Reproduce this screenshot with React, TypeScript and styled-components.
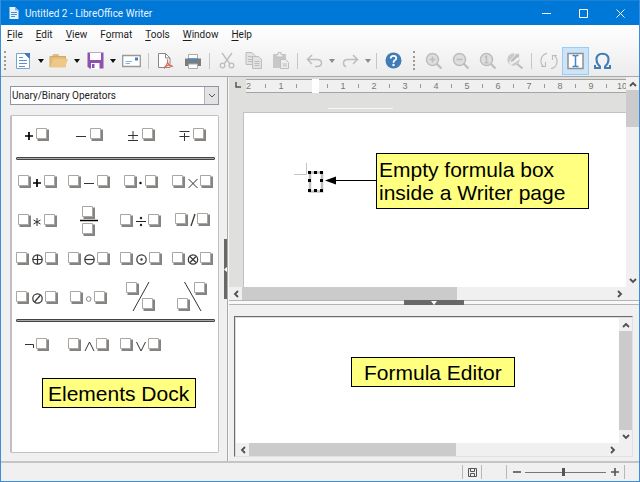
import React from "react";
import styled, { createGlobalStyle } from "styled-components";

const GlobalStyle = createGlobalStyle`
  * { box-sizing: border-box; }
  html, body { margin: 0; padding: 0; }
  body { font-family: Roboto, "Open Sans", sans-serif; font-size: 10px; color: #1c1c1c; }
  button { border: 0; padding: 0; margin: 0; background: none; font: inherit; color: inherit; }
  svg { display: block; }
`;

const AppWindow = styled.div`
  display: flex;
  flex-direction: column;
  min-height: 100vh;
  background: #f0f0f0;
  border: 1px solid #3a8fd8;
  border-top: 0;
`;

const TitleBar = styled.header`
  display: flex;
  align-items: center;
  height: 25px;
  padding-left: 8px;
  background: #0078d7;
  color: #e9f4ff;
  border-top: 1px solid #1c82d4;
`;

const Title = styled.h1`
  flex: 1;
  margin: 0 0 0 6px;
  font: 400 10px Roboto, sans-serif;
`;

const WindowButton = styled.button`
  display: grid;
  place-items: center;
  width: 37px;
  height: 24px;
`;

const TopBars = styled.div`
  background: linear-gradient(#ffffff, #ececec);
  border-bottom: 1px solid #a9a9a9;
`;

const MenuBar = styled.nav`
  display: flex;
  align-items: center;
  gap: 13px;
  height: 20px;
  padding-left: 6px;
`;

const MenuButton = styled.button`
  line-height: 16px;
  u { text-underline-offset: 2px; }
`;

const Toolbar = styled.div`
  display: flex;
  align-items: center;
  height: 31px;
`;

const Grip = styled.span<{ $wide?: boolean }>`
  display: flex;
  justify-content: center;
  width: ${(p) => (p.$wide ? 13 : 7)}px;
  margin-right: ${(p) => (p.$wide ? 0 : 2)}px;
  &::before {
    content: "";
    height: 19px;
    border-left: 2px dotted #9a9a9a;
  }
`;

const ToolButton = styled.button<{ $split?: boolean; $active?: boolean }>`
  display: grid;
  place-items: center;
  width: ${(p) => (p.$split ? 26 : 27)}px;
  height: 28px;
  background: ${(p) => (p.$active ? "#cce4f7" : "transparent")};
  border: 1px solid ${(p) => (p.$active ? "#99cdf5" : "transparent")};
`;

const DropButton = styled.button<{ $dim?: boolean }>`
  display: grid;
  place-items: center;
  width: 10px;
  height: 28px;
  &::before {
    content: "";
    border: 3px solid transparent;
    border-top: 4px solid ${(p) => (p.$dim ? "#8a8a8a" : "#111")};
    border-bottom: 0;
  }
`;

const Separator = styled.span`
  width: 1px;
  height: 16px;
  margin: 0 3px;
  background: #c6c6c6;
`;

const Body = styled.div`
  display: flex;
  flex: 1;
  border-bottom: 2px solid #c4c4c4;
`;

const Sidebar = styled.aside`
  display: flex;
  flex-direction: column;
  flex: 0 0 222px;
  gap: 10px;
  padding: 9px 4px 8px 9px;
`;

const SelectWrap = styled.label`
  display: block;
  position: relative;
  height: 19px;
`;

const CategorySelect = styled.select`
  appearance: none;
  width: 100%;
  height: 19px;
  padding: 0 20px 0 1px;
  border: 1px solid #8d95a3;
  border-radius: 0;
  background: #fff;
  color: #222;
  font: 10px Roboto, sans-serif;
`;

const SelectArrow = styled.span`
  position: absolute;
  top: 1px;
  right: 1px;
  display: grid;
  place-items: center;
  width: 14px;
  height: 17px;
  background: #e3e3e3;
  border-left: 1px solid #b4b4b4;
  pointer-events: none;
`;

const Dock = styled.section`
  position: relative;
  flex: 1;
  border: 1px solid #c0c0c0;
  border-left-width: 2px;
  border-radius: 2px;
  background: #fff;
`;

const ElementGrid = styled.div`
  display: grid;
  grid-template-columns: repeat(4, 52px);
  grid-auto-rows: 38px;
  margin: 0 -1px;
`;

const GroupRule = styled.hr`
  height: 3px;
  margin: 3px 3px 4px 4px;
  border: 1px solid #444;
  border-radius: 1px;
  background: #aaa;
`;

const Callout = styled.p`
  position: absolute;
  margin: 0;
  border: 1px solid #000;
  background: #ffff80;
  color: #000;
  font: 21px/23px "Liberation Sans", Arial, sans-serif;
  white-space: nowrap;
`;

const DockCallout = styled(Callout)`
  left: 30px;
  top: 262px;
  padding: 3px 6px 2px 5px;
`;

const WriterCallout = styled(Callout)`
  left: 147px;
  top: 76px;
  width: 213px;
  padding: 4px 2px;
`;

const EditorCallout = styled(Callout)`
  left: 116px;
  top: 40px;
  padding: 3px 12px 2px;
`;

const VSplitter = styled.div`
  display: flex;
  align-items: center;
  justify-content: flex-end;
  flex: 0 0 5px;
  border-right: 1px solid #a9a9a9;
`;

const VHandle = styled.button`
  display: grid;
  place-items: center;
  width: 3px;
  height: 60px;
  background: #686868;
`;

const Workspace = styled.main`
  display: flex;
  flex: 1;
  flex-direction: column;
  min-width: 0;
  border-left: 1px solid #f8f8f8;
`;

const Writer = styled.section`
  display: flex;
  height: 210px;
`;

const Canvas = styled.div`
  position: relative;
  display: flex;
  flex-direction: column;
  flex: 1;
  min-width: 0;
  background: #dfdfdd;
`;

const Ruler = styled.div`
  display: flex;
  height: 14px;
  margin-top: 2px;
  color: #777;
  font: 9px/12px "Liberation Sans", sans-serif;
`;

const TabStop = styled.span`
  width: 17px;
  padding: 3px 0 0 6px;
`;

const RulerPart = styled.div<{ $grow?: boolean }>`
  display: flex;
  align-items: center;
  flex: ${(p) => (p.$grow ? "1" : "0 0 66px")};
  overflow: hidden;
  background: #f0f0f0;
  border: solid #a4a4a4;
  border-width: 1px 0;
`;

const RulerGap = styled.span`
  width: 7px;
  background: #fff;
`;

const RulerCell = styled.span<{ $width: number; $tick?: boolean }>`
  display: flex;
  align-items: center;
  flex: 0 0 ${(p) => p.$width}px;
  height: 12px;
  &::before {
    content: "";
    display: ${(p) => (p.$tick ? "block" : "none")};
    width: 1px;
    height: 4px;
    margin-right: auto;
    background: #999;
  }
  &::after {
    content: "";
    margin-left: auto;
  }
`;

const HeaderMark = styled.div`
  width: 65px;
  height: 1px;
  margin: 15px 0 3px 99px;
  background: #f8f8f8;
`;

const Paper = styled.div`
  flex: 1;
  margin-left: 14px;
  border: solid #c2c2c0;
  border-width: 1px 0 0 1px;
  background: #fff;
`;

const FormulaObject = styled.svg`
  position: absolute;
  left: 65px;
  top: 85px;
`;

const VBar = styled.div`
  display: flex;
  flex-direction: column;
  flex: 0 0 13px;
  background: #f0f0f0;
`;

const HBar = styled.div`
  display: flex;
  height: 13px;
  padding-right: 13px;
  background: #f0f0f0;
`;

const ScrollButton = styled.button`
  display: grid;
  place-items: center;
  width: 13px;
  height: 13px;
`;

const HTrack = styled.div`
  flex: 1;
`;

const HThumb = styled.div`
  width: 58%;
  height: 13px;
  background: #cbcbcb;
`;

const VTrack = styled.div`
  display: flex;
  flex-direction: column;
  flex: 1;
`;

const VThumb = styled.div<{ $height: number }>`
  height: ${(p) => p.$height}%;
  background: #cbcbcb;
`;

const HSplitter = styled.div`
  display: flex;
  justify-content: center;
  height: 5px;
  border: solid #b4b4b4;
  border-width: 1px 0;
  background: #f8f8f8;
`;

const HHandle = styled.button`
  display: grid;
  place-items: center;
  width: 60px;
  height: 5px;
  margin-top: -1px;
  background: #686868;
`;

const FormulaEditor = styled.section`
  position: relative;
  display: flex;
  flex-direction: column;
  flex: 1;
  margin: 11px 6px 4px 5px;
  padding: 1px 0 0 1px;
  border: 1px solid #e0e0e0;
  border-top-color: #6c6c6c;
  border-left-color: #6c6c6c;
  background: #dcdcdc;
`;

const EditorRow = styled.div`
  display: flex;
  flex: 1;
`;

const EditorInput = styled.textarea`
  flex: 1;
  min-width: 0;
  border: 0;
  resize: none;
  outline: 0;
  background: #fff;
`;

const StatusBar = styled.footer`
  display: flex;
  align-items: center;
  justify-content: flex-end;
  height: 18px;
  padding-right: 14px;
`;

const StatusCell = styled.div<{ $width: number }>`
  display: flex;
  align-items: center;
  justify-content: center;
  width: ${(p) => p.$width}px;
  height: 14px;
  border-left: 1px solid #b8b8b8;
`;

const ZoomCell = styled(StatusCell)`
  border-right: 1px solid #b8b8b8;
  gap: 4px;
`;

const ZoomButton = styled.button`
  display: grid;
  place-items: center;
  width: 9px;
  height: 14px;
`;

const ZoomRange = styled.input`
  appearance: none;
  width: 81px;
  height: 12px;
  margin: 0;
  background: linear-gradient(#777, #777) center / 100% 1px no-repeat;
  &::-webkit-slider-thumb {
    appearance: none;
    width: 3px;
    height: 8px;
    background: #555;
  }
`;

type Dir = "up" | "down" | "left" | "right";
const chevrons: Record<Dir, string> = {
  up: "M1 6 4 3 7 6",
  down: "M1 2 4 5 7 2",
  left: "M6 1 3 4 6 7",
  right: "M2 1 5 4 2 7",
};

function Arrow({ dir }: { dir: Dir }) {
  return (
    <ScrollButton aria-label={`Scroll ${dir}`}>
      <svg width="8" height="8" fill="none" stroke="#505050" strokeWidth="1.800"><path d={chevrons[dir]} /></svg>
    </ScrollButton>
  );
}

function HorizontalScroll() {
  return <HBar><Arrow dir="left" /><HTrack><HThumb /></HTrack><Arrow dir="right" /></HBar>;
}

function VerticalScroll({ size }: { size: number }) {
  return <VBar><Arrow dir="up" /><VTrack><VThumb $height={size} /></VTrack><Arrow dir="down" /></VBar>;
}

function Operand({ x, y }: { x: number; y: number }) {
  return (
    <g transform={`translate(${x} ${y})`}>
      <path d="M1.500 1.500H13V13H1.500Z" fill="#868482" />
      <path d="M.5 .5H10.500V10.500H.5Z" fill="#fff" stroke="#aaa6a2" />
    </g>
  );
}

interface Element {
  name: string;
  boxes: [number, number][];
  mark: React.ReactNode;
}

const thin = { fill: "none", stroke: "#333", strokeWidth: 1 };
const bold = { fill: "none", stroke: "#000", strokeWidth: 1.7 };
const logicBoxes: [number, number][] = [[5, 12], [33, 12]];

const unary: Element[] = [
  { name: "Plus sign", boxes: [[25, 12]], mark: <path {...bold} d="M14 20H22M18 16V24" /> },
  { name: "Minus sign", boxes: [[27, 12]], mark: <path {...thin} d="M13 20.500H23" /> },
  { name: "Plus minus", boxes: [[27, 12]], mark: <path {...thin} d="M13 19.500H23M18 15V23.500M13 24.500H23" /> },
  { name: "Minus plus", boxes: [[26, 12]], mark: <path {...thin} d="M12.500 15.500H22.500M12.500 20.500H22.500M17.500 17V25" /> },
];

const binary: Element[] = [
  { name: "Addition", boxes: [[7, 11], [33, 11]], mark: <path {...bold} d="M22 19H30M26 15V23" /> },
  { name: "Subtraction", boxes: [[5, 11], [34, 11]], mark: <path {...thin} d="M21 19.500H31" /> },
  { name: "Multiplication (dot)", boxes: [[9, 11], [30, 11]], mark: <circle cx="25.500" cy="19" r="1.200" fill="#000" /> },
  { name: "Multiplication (x)", boxes: [[5, 11], [33, 11]], mark: <path {...thin} d="M21.500 15 30.500 24M30.500 15 21.500 24" /> },
  { name: "Multiplication (*)", boxes: [[7, 12], [33, 12]], mark: <path {...thin} d="M26 16V24M22.500 18 29.500 22M29.500 18 22.500 22" /> },
  { name: "Fraction", boxes: [[19, 4], [19, 21]], mark: <path d="M17 18.500H35" stroke="#000" strokeWidth="1.500" /> },
  { name: "Division", boxes: [[5, 12], [33, 12]], mark: <g fill="#222"><path d="M21 19H31V20H21Z" /><circle cx="26" cy="16" r="1.200" /><circle cx="26" cy="23" r="1.200" /></g> },
  { name: "Division (slash)", boxes: [[8, 11], [30, 11]], mark: <path {...thin} strokeWidth="1.300" d="M28 12 24 24" /> },
  { name: "Circled plus", boxes: [[5, 12], [34, 12]], mark: <g {...thin} strokeWidth="1.200"><circle cx="26.500" cy="19.500" r="4.700" /><path d="M22 19.500H31M26.500 15V24" /></g> },
  { name: "Circled minus", boxes: [[5, 12], [34, 12]], mark: <g {...thin} strokeWidth="1.200"><circle cx="26.500" cy="19.500" r="4.700" /><path d="M22 19.500H31" /></g> },
  { name: "Circled dot", boxes: [[5, 12], [34, 12]], mark: <g {...thin} strokeWidth="1.200"><circle cx="26.500" cy="19.500" r="4.700" /><circle cx="26.500" cy="19.500" r=".6" /></g> },
  { name: "Circled times", boxes: [[5, 12], [33, 12]], mark: <g {...thin} strokeWidth="1.200"><circle cx="26" cy="19.500" r="4.700" /><path d="M23 16.500 29 22.500M29 16.500 23 22.500" /></g> },
  { name: "Circled slash", boxes: [[5, 13], [34, 13]], mark: <g {...thin} strokeWidth="1.200"><circle cx="26.500" cy="20.500" r="4.700" /><path d="M29.500 17 23.500 24" /></g> },
  { name: "Concatenate", boxes: [[7, 13], [31, 13]], mark: <circle cx="25.700" cy="21" r="2.300" fill="none" stroke="#888" /> },
  { name: "Wide slash", boxes: [[11, 4], [27, 20]], mark: <path {...thin} d="M34 4 18 33" /> },
  { name: "Wide backslash", boxes: [[27, 4], [10, 20]], mark: <path {...thin} d="M17.500 4 34 33" /> },
];

const logic: Element[] = [
  { name: "Boolean NOT", boxes: [[25, 12]], mark: <path {...thin} d="M14 18.500H22.500V22" /> },
  { name: "Boolean AND", boxes: logicBoxes, mark: <path {...thin} d="M22 25 26.500 16 31 25" /> },
  { name: "Boolean OR", boxes: logicBoxes, mark: <path {...thin} d="M21.500 16 26 25 30.500 16" /> },
];

function Elements({ items }: { items: Element[] }) {
  return (
    <ElementGrid>
      {items.map((item) => (
        <button key={item.name} aria-label={item.name}>
          <svg width="52" height="38">
            {item.boxes.map(([x, y]) => <Operand key={`${x}-${y}`} x={x} y={y} />)}
            {item.mark}
          </svg>
        </button>
      ))}
    </ElementGrid>
  );
}

const gray = { fill: "none", stroke: "#bdbdbd", strokeWidth: 1.5 };

function ZoomIcon({ children }: { children: React.ReactNode }) {
  return (
    <svg width="18" height="18" {...gray}>
      <path d="M11 11 16.500 16.500" strokeWidth="2.200" />
      <circle cx="7.500" cy="7.500" r="6" fill="#dedede" />
      {children}
    </svg>
  );
}

const icons = {
  doc: (
    <svg width="16" height="18"><path d="M1.500 1.500H9.500L14.500 6.500V16.500H1.500Z" fill="#fff" stroke="#7ba4cc" /><path d="M9 1H15V7Z" fill="#3e7dbd" /><path d="M4 5.500H8M4 8.500H12M4 11.500H12M4 14.500H10" stroke="#5b93c8" /></svg>
  ),
  open: (
    <svg width="20" height="17"><path d="M1 15V4H3L4.500 2H9L10.500 4H17V15Z" fill="#e0bd80" /><path d="M1 15V4.500H16.500V7" fill="none" stroke="#d6a95f" /><path d="M1 15.500 4.500 7H19L16 15.500Z" fill="#eec887" /></svg>
  ),
  save: (
    <svg width="17" height="17"><path d="M.5 .5H16.500V16.500H2.500L.5 14.500Z" fill="#8e51ad" /><path d="M3 1H14V8H3Z" fill="#fff" /><path d="M4 11H12.500V17H4Z" fill="#fff" /><path d="M5 12H7.500V16H5Z" fill="#8e51ad" /></svg>
  ),
  mail: (
    <svg width="19" height="14"><path d="M.7 1.500H18.300V12.500H.7Z" fill="#fff" stroke="#999" strokeWidth="1.300" /><path d="M13 3.500H16V6.500H13Z" fill="#3f7fbf" /><path d="M3.500 7.500H10M3.500 9.500H8" stroke="#8bb3d9" /></svg>
  ),
  pdf: (
    <svg width="17" height="18" fill="none"><path d="M1.500 1.500H8.500L13 6V15.500H1.500Z" fill="#fff" stroke="#888" /><path d="M8.500 1.500V6H13" stroke="#888" /><path d="M10 7.500C12 8.500 9.500 14 7 16.500M10.500 10C11.500 13 14 14.500 16 14.500M7 15.500C9 13 13 12.500 16 14.500" stroke="#e06a55" strokeWidth="1.200" /></svg>
  ),
  print: (
    <svg width="18" height="18"><path d="M4.500 2.500H13.500V7H4.500Z" fill="#fff" stroke="#aaa" /><path d="M1 6.500H17V14H1Z" fill="#7c7c7c" /><path d="M4 6.500H14V8.500H4Z" fill="#4c88c2" /><path d="M4.500 12H13.500V16.500H4.500Z" fill="#fff" stroke="#aaa" /></svg>
  ),
  cut: (
    <svg width="16" height="17" {...gray} strokeWidth="1.300"><path d="M3 1 11 12M13 1 5 12" /><circle cx="3.500" cy="13.500" r="2.300" /><circle cx="12.500" cy="13.500" r="2.300" /></svg>
  ),
  copy: (
    <svg width="18" height="17" stroke="#bdbdbd" fill="#e2e2e2"><path d="M1 .5H7L10 3.500V12.500H1Z" /><path d="M3 4.500H7M3 7.500H7M3 9.500H7" /><path d="M7.500 4.500H13.500L16.500 7.500V16.500H7.500Z" /><path d="M9.500 9.500H14.500M9.500 11.500H14.500M9.500 13.500H14.500" /></svg>
  ),
  paste: (
    <svg width="18" height="17"><path d="M1 2H14V16H1Z" fill="#c8c8c8" /><path d="M4 2.500H6V.5H9V2.500H11V5H4Z" fill="#eee" stroke="#bdbdbd" /><path d="M8.500 7.500H13.500L16.500 10.500V16.500H8.500Z" fill="#eee" stroke="#bdbdbd" /><path d="M10.500 12H15M10.500 14H15" stroke="#bbb" /></svg>
  ),
  undo: (
    <svg width="17" height="14" {...gray}><path d="M6 1 1.500 5.500 6 10M1.500 5.500H11Q15.500 5.500 15.500 9T11 12.500H9" /></svg>
  ),
  redo: (
    <svg width="17" height="14" {...gray}><path d="M11 1 15.500 5.500 11 10M15.500 5.500H6Q1.500 5.500 1.500 9T4 12.500" /></svg>
  ),
  help: (
    <svg width="17" height="17"><circle cx="8.500" cy="8.500" r="8" fill="#3f7cb8" /><path d="M5.700 6.500Q5.700 3.800 8.500 3.800T11.300 6.300Q11.300 7.500 9.800 8.300 8.500 9 8.500 10.700" fill="none" stroke="#fff" strokeWidth="1.800" /><circle cx="8.500" cy="13" r="1.200" fill="#fff" /></svg>
  ),
  zoomIn: <ZoomIcon><path d="M4.500 7.500H10.500M7.500 4.500V10.500" /></ZoomIcon>,
  zoomOut: <ZoomIcon><path d="M4.500 7.500H10.500" /></ZoomIcon>,
  zoomOne: <ZoomIcon><path d="M5.800 5.500 7.500 4.500V11M5.500 10.700H9.500" /></ZoomIcon>,
  zoomBack: (
    <svg width="18" height="18"><path d="M10 11 16.500 16.500" stroke="#bdbdbd" strokeWidth="2.200" /><path d="M9 1.500A6.200 6.200 0 1 0 13.700 7L11.500 9 5 13 3 10 8 5Z" fill="#cacaca" /><path d="M4 11 5 7.500 9 3.500 8 2 13.500 1.500 13 7 11.500 5.500 7.500 9.500Z" fill="#bdbdbd" stroke="#f2f2f2" strokeWidth=".8" /></svg>
  ),
  refresh: (
    <svg width="18" height="18" {...gray} strokeWidth="1.200"><path d="M7 1.300A7.500 7.500 0 0 0 4.500 15M1 14.500H5.500V10M11 16.700A7.500 7.500 0 0 0 13.500 3M17 3.500H12.500V8" /></svg>
  ),
  cursor: (
    <svg width="17" height="18" fill="none"><path d="M1 1.500H16V16.500H1Z" fill="#fff" stroke="#909090" strokeWidth="1.500" /><path d="M5.500 3.500H7.500L8.500 4.500 9.500 3.500H11.500M8.500 4V14M5.500 14.500H7.500L8.500 13.500 9.500 14.500H11.500" stroke="#4a86c2" strokeWidth="1.500" /></svg>
  ),
  omega: (
    <svg width="17" height="18"><path d="M1 13V16H6V14.500Q2.500 11.500 2.500 7.500 2.500 1.800 8.500 1.800T14.500 7.500Q14.500 11.500 11 14.500V16H16V13" fill="none" stroke="#3f7cb8" strokeWidth="2" /></svg>
  ),
};

function Tool({ icon, label, drop, dim, active }: { icon: keyof typeof icons; label: string; drop?: boolean; dim?: boolean; active?: boolean }) {
  return (
    <>
      <ToolButton aria-label={label} $split={drop} $active={active}>{icons[icon]}</ToolButton>
      {drop && <DropButton aria-label={`${label} options`} $dim={dim} />}
    </>
  );
}

const menus: [string, string, string][] = [
  ["", "F", "ile"], ["", "E", "dit"], ["", "V", "iew"], ["F", "o", "rmat"], ["", "T", "ools"], ["", "W", "indow"], ["", "H", "elp"],
];

export default function App() {
  return (
    <AppWindow>
      <GlobalStyle />
      <TitleBar>
        <svg width="10" height="12"><path d="M.5 0H6L9.500 3.500V12H.5Z" fill="#e8f3fb" /><path d="M6 0V3.500H9.500Z" fill="#7fb4de" /><path d="M2 5.500H8M2 7.500H8M2 9.500H6" stroke="#4390cd" /></svg>
        <Title>Untitled 2 - LibreOffice Writer</Title>
        <WindowButton aria-label="Minimize"><svg width="9" height="9" stroke="#fff"><path d="M0 4.500H9" /></svg></WindowButton>
        <WindowButton aria-label="Maximize"><svg width="9" height="9" stroke="#fff" fill="none"><path d="M.5 .5H8.500V8.500H.5Z" /></svg></WindowButton>
        <WindowButton aria-label="Close"><svg width="9" height="9" stroke="#fff"><path d="M.5 .5 8.500 8.500M8.500 .5 .5 8.500" /></svg></WindowButton>
      </TitleBar>
      <TopBars>
        <MenuBar>
          {menus.map(([before, key, after]) => (
            <MenuButton key={key + after}>{before}<u>{key}</u>{after}</MenuButton>
          ))}
        </MenuBar>
        <Toolbar>
          <Grip />
          <Tool icon="doc" label="New" drop />
          <Tool icon="open" label="Open" drop />
          <Tool icon="save" label="Save" drop />
          <Tool icon="mail" label="Email" />
          <Separator />
          <Tool icon="pdf" label="Export as PDF" />
          <Tool icon="print" label="Print" />
          <Separator />
          <Tool icon="cut" label="Cut" />
          <Tool icon="copy" label="Copy" />
          <Tool icon="paste" label="Paste" />
          <Separator />
          <Tool icon="undo" label="Undo" drop dim />
          <Tool icon="redo" label="Redo" drop dim />
          <Separator />
          <Tool icon="help" label="Help" />
          <Grip $wide />
          <Tool icon="zoomIn" label="Zoom in" />
          <Tool icon="zoomOut" label="Zoom out" />
          <Tool icon="zoomOne" label="Zoom 100%" />
          <Tool icon="zoomBack" label="Show all" />
          <Separator />
          <Tool icon="refresh" label="Update" />
          <Tool icon="cursor" label="Formula cursor" active />
          <Tool icon="omega" label="Symbols" />
        </Toolbar>
      </TopBars>
      <Body>
        <Sidebar>
          <SelectWrap>
            <CategorySelect aria-label="Element category"><option>Unary/Binary Operators</option></CategorySelect>
            <SelectArrow><svg width="8" height="6" fill="none" stroke="#555"><path d="M1 1 4 4 7 1" /></svg></SelectArrow>
          </SelectWrap>
          <Dock aria-label="Elements">
            <Elements items={unary} />
            <GroupRule />
            <Elements items={binary} />
            <GroupRule />
            <Elements items={logic} />
            <DockCallout>Elements Dock</DockCallout>
          </Dock>
        </Sidebar>
        <VSplitter>
          <VHandle aria-label="Hide sidebar"><svg width="3" height="5"><path d="M3 0V5L0 2.500Z" fill="#fff" /></svg></VHandle>
        </VSplitter>
        <Workspace>
          <Writer>
            <Canvas>
              <Ruler>
                <TabStop><svg width="6" height="6" fill="none" stroke="#555" strokeWidth="1.500"><path d="M1 0V5H6" /></svg></TabStop>
                <RulerPart>
                  <RulerCell $width={19}>2</RulerCell>
                  <RulerCell $width={31} $tick>1</RulerCell>
                  <RulerCell $width={15} $tick />
                </RulerPart>
                <RulerGap />
                <RulerPart $grow>
                  <RulerCell $width={8} />
                  {[1, 2, 3, 4, 5, 6, 7, 8, 9, 10].map((n) => <RulerCell key={n} $width={31} $tick>{n}</RulerCell>)}
                </RulerPart>
              </Ruler>
              <HeaderMark />
              <Paper />
              <FormulaObject width="84" height="34">
                <path d="M0 12.500H12.500V1" fill="none" stroke="#c4c4c4" />
                <path d="M16 10.500H28V29.500H16Z" fill="#fff" stroke="#c0c0c0" strokeWidth="2.500" />
                <path d="M14 9h3v3h-3zM20 9h3v3h-3zM26 9h3v3h-3zM14 17h3v3h-3zM26 17h3v3h-3zM14 27h3v3h-3zM20 27h3v3h-3zM26 27h3v3h-3z" fill="#000" />
                <path d="M40 18.500H84" stroke="#000" />
                <path d="M31 18.500 42 14.500V22.500Z" fill="#000" />
              </FormulaObject>
              <WriterCallout>Empty formula box<br />inside a Writer page</WriterCallout>
            </Canvas>
            <VerticalScroll size={20} />
          </Writer>
          <HorizontalScroll />
          <HSplitter><HHandle aria-label="Collapse editor"><svg width="6" height="4"><path d="M0 0H6L3 4Z" fill="#fff" /></svg></HHandle></HSplitter>
          <FormulaEditor>
            <EditorRow>
              <EditorInput aria-label="Formula commands" />
              <VerticalScroll size={100} />
            </EditorRow>
            <HorizontalScroll />
            <EditorCallout>Formula Editor</EditorCallout>
          </FormulaEditor>
        </Workspace>
      </Body>
      <StatusBar>
        <StatusCell $width={19}><svg width="9" height="9" fill="none" stroke="#555"><path d="M.5 .5H8.500V8.500H.5ZM2.500 .5V3.500H6.500V.5M2.500 8.500V5.500H6.500V8.500" /></svg></StatusCell>
        <StatusCell $width={25} />
        <ZoomCell $width={119}>
          <ZoomButton aria-label="Zoom out view"><svg width="8" height="8" stroke="#555" strokeWidth="1.600"><path d="M0 4H8" /></svg></ZoomButton>
          <ZoomRange type="range" aria-label="View zoom" defaultValue={48} />
          <ZoomButton aria-label="Zoom in view"><svg width="8" height="8" stroke="#555" strokeWidth="1.600"><path d="M0 4H8M4 0V8" /></svg></ZoomButton>
        </ZoomCell>
      </StatusBar>
    </AppWindow>
  );
}
